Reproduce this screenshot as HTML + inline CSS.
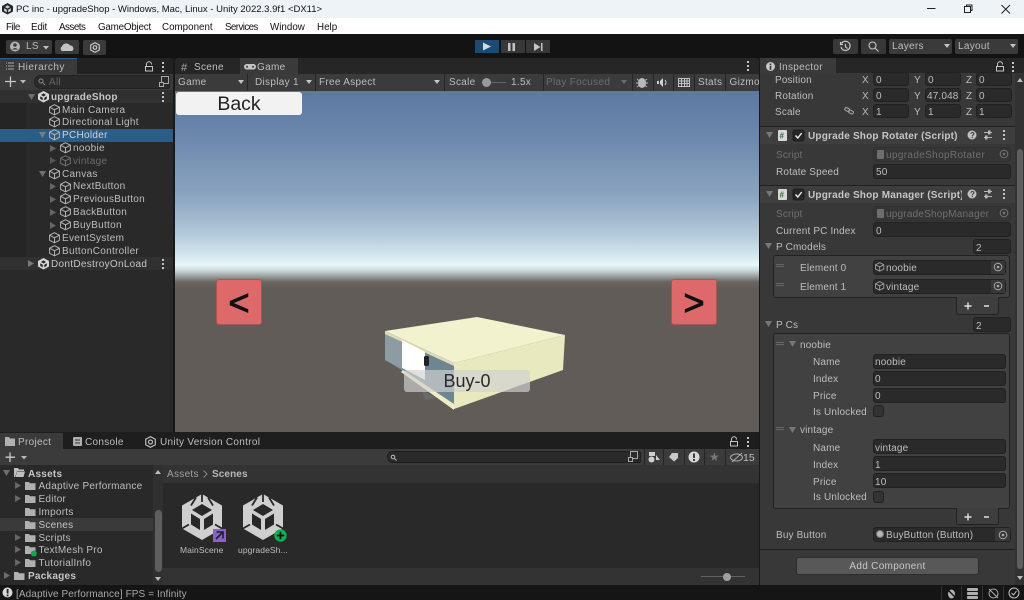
<!DOCTYPE html>
<html><head><meta charset="utf-8"><style>
html,body{margin:0;padding:0;width:1024px;height:600px;overflow:hidden;background:#191919;font-family:"Liberation Sans",sans-serif}
#r{position:relative;width:1024px;height:600px;overflow:hidden;letter-spacing:.3px}
.b{position:absolute}
.t{position:absolute;white-space:nowrap;font-size:10px;line-height:12px;height:12px;color:#bdbdbd;margin-top:1px}
.ins .t{margin-top:2px;letter-spacing:.15px}
.p2 .t{margin-top:2px;letter-spacing:.25px}
.d{color:#7e7e7e}.h{font-weight:bold;color:#c6c6c6;letter-spacing:.2px}
.f{position:absolute;background:#2a2a2a;border:1px solid #212121;border-radius:3px;box-sizing:border-box;height:15px}
svg.i{position:absolute;overflow:visible}
.m{position:absolute;top:22px;font-size:9.800px;line-height:12px;color:#111;white-space:nowrap;letter-spacing:0}
</style></head><body><div id="r">
<svg width="0" height="0" style="position:absolute"><defs>
<g id="cube" fill="none" stroke="#b4b4b4" stroke-width="1"><path d="M5.500 .7 10.400 3.200V8.300L5.500 10.800 .6 8.300V3.200ZM.6 3.200 5.500 5.800 10.400 3.200M5.500 5.800V10.800"/></g>
<g id="ucube"><path d="M5.500 0 11 3V8.500L5.500 11.500 0 8.500V3Z" fill="#d8d8d8"/><path d="M5.500 2.300 8 4 5.500 5.500 3 4ZM2.200 5.300 4.800 6.800V9.400L2.200 7.900ZM8.800 5.300 6.200 6.800V9.400L8.800 7.900Z" fill="#2a2a2a"/></g>
<g id="folder"><path d="M0 2H4L5 3.200H10.500V10H0Z" fill="#b0b0b0"/></g>
<g id="unity"><path d="M20 0 40 11.500V34.500L20 46 0 34.500V11.500Z" fill="#cfcfcf"/><path d="M20 10 30 16 20 22 10 16ZM9 19.500 18 25V36L9 30.500ZM31 19.500 22 25V36L31 30.500Z" fill="#282828"/><path d="M20 0V8M0 34.500 7 30.500M40 34.500 33 30.500M14 3.500 9 11.500M26 3.500 31 11.500" stroke="#282828" stroke-width="1.800"/></g>
<g id="tarrow"><path d="M0 0H7L3.500 6Z"/></g>
<g id="rarrow"><path d="M0 0 6 3.500 0 7Z"/></g>
<g id="pick" fill="none" stroke="#a8a8a8"><circle cx="5" cy="5" r="3.800"/><circle cx="5" cy="5" r="1.300" fill="#a8a8a8" stroke="none"/></g>
<g id="dots" fill="#c4c4c4"><rect x="0" y="0" width="2" height="2"/><rect x="0" y="4" width="2" height="2"/><rect x="0" y="8" width="2" height="2"/></g>
<g id="lock" fill="none" stroke="#c4c4c4" stroke-width="1"><rect x=".5" y="4.500" width="7" height="4.500"/><path d="M1.500 4.500V2.500A2.500 2.500 0 0 1 6.500 2V2.500"/></g>
<g id="script"><rect width="9" height="11" rx="1" fill="#d8d8d8"/><text x="1.500" y="8.500" font-size="8" font-weight="bold" fill="#2b6b3c" font-family="Liberation Sans">#</text></g>
<g id="check"><rect width="11" height="11" rx="2" fill="#262626" stroke="#1c1c1c"/><path d="M2.500 5.500 4.800 8 8.700 3" fill="none" stroke="#ececec" stroke-width="1.400"/></g>
<g id="ctrl" fill="none" stroke="#b8b8b8"><path d="M0 2.500H8M0 7.500H8"/><rect x="4.500" y="1" width="1.500" height="3" fill="#b8b8b8"/><rect x="1.500" y="6" width="1.500" height="3" fill="#b8b8b8"/></g>
<g id="help"><circle cx="5" cy="5" r="4.500" fill="#c0c0c0"/><text x="3" y="8" font-size="8" font-weight="bold" fill="#383838" font-family="Liberation Sans">?</text></g>
</defs></svg>

<!-- title -->
<div class="b" style="left:0;top:0;width:1024px;height:18px;background:#eef3f8"></div>
<svg class="i" style="left:2px;top:3px" width="11" height="12"><use href="#ucube" style="filter:invert(1)"/></svg>
<div class="t" style="left:16px;top:3px;color:#111;letter-spacing:0;font-size:9.500px">PC inc - upgradeShop - Windows, Mac, Linux - Unity 2022.3.9f1 &lt;DX11&gt;</div>
<svg class="i" style="left:925px;top:3px" width="95" height="14" fill="none" stroke="#222"><path d="M2 5.500H10.500"/><rect x="39.500" y="3.500" width="6" height="6"/><path d="M41.500 3.500V2H47V7.500H45.500"/><path d="M76.500 2 85 10.500M85 2 76.500 10.500"/></svg>
<!-- menu -->
<div class="b" style="left:0;top:18px;width:1024px;height:16px;background:#fff"></div>
<div class="m" style="left:6px;letter-spacing:-.5px">File</div><div class="m" style="left:31px;letter-spacing:-.2px">Edit</div><div class="m" style="left:59px;letter-spacing:-.5px">Assets</div><div class="m" style="left:98px;letter-spacing:-.2px">GameObject</div><div class="m" style="left:162px">Component</div><div class="m" style="left:225px;letter-spacing:-.6px">Services</div><div class="m" style="left:270px">Window</div><div class="m" style="left:317px">Help</div>
<!-- toolbar -->
<div class="b" style="left:0;top:34px;width:1024px;height:24px;background:#131313"></div>
<div class="b" style="left:6px;top:40px;width:46px;height:14px;background:#3a3a3a;border-radius:2px"></div>
<svg class="i" style="left:10px;top:41px" width="40" height="12"><circle cx="5" cy="5.500" r="5" fill="#b4b4b4"/><circle cx="5" cy="4" r="1.800" fill="#3a3a3a"/><path d="M2 8.500Q5 5.500 8 8.500" fill="#3a3a3a"/><path d="M33 5H39L36 8.500Z" fill="#c0c0c0"/></svg>
<div class="t" style="left:26px;top:40px;color:#b8b8b8">LS</div>
<div class="b" style="left:55px;top:40px;width:24px;height:14px;background:#3a3a3a;border-radius:2px"></div>
<svg class="i" style="left:60px;top:42px" width="14" height="10"><path d="M2 9A2.500 2.500 0 0 1 2 4.500 4.500 4.500 0 0 1 10 3.500 3 3 0 0 1 12 9Z" fill="#c4c4c4"/></svg>
<div class="b" style="left:83px;top:40px;width:23px;height:15px;background:#3a3a3a;border-radius:2px"></div>
<svg class="i" style="left:90px;top:42px" width="10" height="11" fill="none" stroke="#c4c4c4" stroke-width="1.200"><path d="M5 .7 9.300 3V8L5 10.300 .7 8V3Z"/><circle cx="5" cy="5.500" r="1.800"/></svg>
<div class="b" style="left:475px;top:40px;width:24px;height:13px;background:#1d4a75"></div>
<div class="b" style="left:501px;top:40px;width:24px;height:13px;background:#383838"></div>
<div class="b" style="left:526px;top:40px;width:24px;height:13px;background:#383838"></div>
<svg class="i" style="left:475px;top:40px" width="80" height="14" fill="#d8d8d8"><path d="M8 2.500 16 6.500 8 10.500Z"/><rect x="33" y="3" width="2.500" height="8" fill="#c4c4c4"/><rect x="37.500" y="3" width="2.500" height="8" fill="#c4c4c4"/><path d="M59 3 65.500 7 59 11Z" fill="#c4c4c4"/><rect x="66" y="3" width="1.500" height="8" fill="#c4c4c4"/></svg>
<div class="b" style="left:833px;top:39px;width:25px;height:15px;background:#383838;border-radius:2px"></div>
<svg class="i" style="left:840px;top:41px" width="11" height="11" fill="none" stroke="#c4c4c4" stroke-width="1.200"><path d="M1.500 2.500A4.600 4.600 0 1 1 1 6M5.500 3V6L7.500 7.500M.5 1V3.500H3"/></svg>
<div class="b" style="left:861px;top:39px;width:25px;height:15px;background:#383838;border-radius:2px"></div>
<svg class="i" style="left:868px;top:41px" width="11" height="11" fill="none" stroke="#c4c4c4" stroke-width="1.100"><circle cx="4.500" cy="4.500" r="3.500"/><path d="M7 7 10.500 10.500"/></svg>
<div class="b" style="left:889px;top:39px;width:63px;height:15px;background:#3a3a3a;border-radius:2px"></div>
<div class="b" style="left:955px;top:39px;width:63px;height:15px;background:#3a3a3a;border-radius:2px"></div>
<div class="t" style="left:892px;top:40px">Layers</div><div class="t" style="left:958px;top:40px">Layout</div>
<svg class="i" style="left:944px;top:44px" width="7" height="5" fill="#c4c4c4"><path d="M0 0H6L3 4Z"/></svg>
<svg class="i" style="left:1010px;top:44px" width="7" height="5" fill="#c4c4c4"><path d="M0 0H6L3 4Z"/></svg>

<!-- hierarchy -->
<div class="b" style="left:0;top:58px;width:173px;height:16px;background:#222;border-radius:3px 3px 0 0"></div>
<div class="b" style="left:0;top:58px;width:77px;height:16px;background:#3a3a3a;border-top:1px solid #2a6090;box-sizing:border-box"></div>
<svg class="i" style="left:6px;top:62px" width="8" height="8" stroke="#aaa"><path d="M0 1H1M2 1H8M0 4H1M2 4H8M0 7H1M2 7H8"/></svg>
<div class="t" style="left:18px;top:61px;letter-spacing:.45px">Hierarchy</div>
<svg class="i" style="left:145px;top:62px" width="8" height="10"><use href="#lock"/></svg>
<svg class="i" style="left:162px;top:62px" width="2" height="10"><use href="#dots"/></svg>
<div class="b" style="left:0;top:74px;width:173px;height:16px;background:#3b3b3b"></div>
<svg class="i" style="left:5px;top:76px" width="22" height="12"><path d="M5.500 .5V11M0 5.500H11" stroke="#c8c8c8" stroke-width="1.300"/><path d="M15 4H21L18 7.500Z" fill="#b8b8b8"/></svg>
<div class="b" style="left:34px;top:75px;width:136px;height:14px;background:#2a2a2a;border-radius:7px 2px 2px 7px;border:1px solid #222;box-sizing:border-box"></div>
<svg class="i" style="left:38px;top:78px" width="8" height="8" fill="none" stroke="#888"><circle cx="3" cy="3" r="2"/><path d="M4.500 4.500 7 7"/></svg>
<div class="t d" style="left:49px;top:76px;color:#666">All</div>
<svg class="i" style="left:159px;top:76px" width="10" height="11" fill="none" stroke="#a8a8a8"><rect x="2.500" y=".5" width="7" height="7"/><rect x=".5" y="6.500" width="4" height="4" fill="#2a2a2a"/></svg>
<div class="b" style="left:0;top:90px;width:173px;height:342px;background:#292929"></div>
<div class="b" style="left:0;top:103px;width:26px;height:154px;background:#252525"></div>
<div class="b" style="left:0;top:90px;width:173px;height:13px;background:#303030"></div>
<div class="b" style="left:0;top:257px;width:173px;height:13px;background:#303030"></div>
<div class="b" style="left:0;top:129px;width:173px;height:13px;background:#2c5d87"></div>
<svg class="i" style="left:28px;top:94px" width="7" height="6" fill="#6e6e6e"><use href="#tarrow"/></svg>
<svg class="i" style="left:38px;top:91px" width="11" height="12"><use href="#ucube"/></svg>
<div class="t h" style="left:51px;top:91px">upgradeShop</div>
<svg class="i" style="left:162px;top:92px" width="2" height="10"><use href="#dots"/></svg>

<svg class="i" style="left:49px;top:104px" width="11" height="12"><use href="#cube"/></svg><div class="t" style="left:62px;top:103.500px">Main Camera</div>
<svg class="i" style="left:49px;top:116px" width="11" height="12"><use href="#cube"/></svg><div class="t" style="left:62px;top:116px">Directional Light</div>
<svg class="i" style="left:39px;top:132px" width="7" height="6" fill="#6e8090"><use href="#tarrow"/></svg>
<svg class="i" style="left:49px;top:129px" width="11" height="12"><use href="#cube"/></svg><div class="t" style="left:62px;top:129px;color:#d4d4d4">PCHolder</div>
<svg class="i" style="left:50px;top:145px" width="6" height="7" fill="#666"><use href="#rarrow"/></svg>
<svg class="i" style="left:60px;top:142px" width="11" height="12"><use href="#cube"/></svg><div class="t" style="left:73px;top:142px">noobie</div>
<svg class="i" style="left:50px;top:157px" width="6" height="7" fill="#555"><use href="#rarrow"/></svg>
<svg class="i" style="left:60px;top:155px;opacity:.5" width="11" height="12"><use href="#cube"/></svg><div class="t" style="left:73px;top:154.500px;color:#6a6a6a">vintage</div>
<svg class="i" style="left:39px;top:171px" width="7" height="6" fill="#6e6e6e"><use href="#tarrow"/></svg>
<svg class="i" style="left:49px;top:168px" width="11" height="12"><use href="#cube"/></svg><div class="t" style="left:62px;top:167.500px">Canvas</div>
<svg class="i" style="left:50px;top:183px" width="6" height="7" fill="#666"><use href="#rarrow"/></svg>
<svg class="i" style="left:60px;top:181px" width="11" height="12"><use href="#cube"/></svg><div class="t" style="left:73px;top:180px">NextButton</div>
<svg class="i" style="left:50px;top:196px" width="6" height="7" fill="#666"><use href="#rarrow"/></svg>
<svg class="i" style="left:60px;top:193px" width="11" height="12"><use href="#cube"/></svg><div class="t" style="left:73px;top:193px">PreviousButton</div>
<svg class="i" style="left:50px;top:209px" width="6" height="7" fill="#666"><use href="#rarrow"/></svg>
<svg class="i" style="left:60px;top:206px" width="11" height="12"><use href="#cube"/></svg><div class="t" style="left:73px;top:206px">BackButton</div>
<svg class="i" style="left:50px;top:222px" width="6" height="7" fill="#666"><use href="#rarrow"/></svg>
<svg class="i" style="left:60px;top:219px" width="11" height="12"><use href="#cube"/></svg><div class="t" style="left:73px;top:219px">BuyButton</div>
<svg class="i" style="left:49px;top:232px" width="11" height="12"><use href="#cube"/></svg><div class="t" style="left:62px;top:232px">EventSystem</div>
<svg class="i" style="left:49px;top:245px" width="11" height="12"><use href="#cube"/></svg><div class="t" style="left:62px;top:244.500px">ButtonController</div>
<svg class="i" style="left:28px;top:260px" width="6" height="7" fill="#7a7a7a"><use href="#rarrow"/></svg>
<svg class="i" style="left:38px;top:258px" width="11" height="12"><use href="#ucube"/></svg><div class="t" style="left:51px;top:257.500px;color:#c4c4c4">DontDestroyOnLoad</div>
<svg class="i" style="left:162px;top:259px" width="2" height="10"><use href="#dots"/></svg>

<!-- game panel -->
<div class="b" style="left:175px;top:58px;width:584px;height:16px;background:#262626;border-radius:3px 3px 0 0"></div>
<div class="b" style="left:240px;top:58px;width:58px;height:16px;background:#3a3a3a"></div>
<div class="t" style="left:181px;top:61px;font-size:11px;color:#aaa">#</div>
<div class="t" style="left:194px;top:61px">Scene</div>
<svg class="i" style="left:244px;top:63px" width="12" height="7"><rect y="1" width="12" height="5.500" rx="2.700" fill="#c4c4c4"/><circle cx="3" cy="3.700" r="1" fill="#3a3a3a"/><circle cx="9" cy="3.700" r="1" fill="#3a3a3a"/></svg>
<div class="t" style="left:257px;top:61px">Game</div>
<svg class="i" style="left:747px;top:61px" width="2" height="10"><use href="#dots"/></svg>
<div class="b" style="left:175px;top:74px;width:584px;height:17px;background:#3b3b3b"></div>
<div class="b" style="left:247px;top:74px;width:1px;height:17px;background:#252525"></div>
<div class="b" style="left:315px;top:74px;width:1px;height:17px;background:#252525"></div>
<div class="b" style="left:444px;top:74px;width:1px;height:17px;background:#252525"></div>
<div class="b" style="left:543px;top:74px;width:1px;height:17px;background:#252525"></div>
<div class="b" style="left:632px;top:74px;width:1px;height:17px;background:#252525"></div>
<div class="b" style="left:653px;top:74px;width:1px;height:17px;background:#252525"></div>
<div class="b" style="left:673px;top:74px;width:1px;height:17px;background:#252525"></div>
<div class="b" style="left:694px;top:74px;width:1px;height:17px;background:#252525"></div>
<div class="b" style="left:725px;top:74px;width:1px;height:17px;background:#252525"></div>
<div class="t" style="left:178px;top:76px">Game</div>
<svg class="i" style="left:238px;top:80px" width="7" height="5" fill="#c4c4c4"><path d="M0 0H6L3 4Z"/></svg>
<div class="t" style="left:255px;top:76px">Display 1</div>
<svg class="i" style="left:306px;top:80px" width="7" height="5" fill="#c4c4c4"><path d="M0 0H6L3 4Z"/></svg>
<div class="t" style="left:319px;top:76px">Free Aspect</div>
<svg class="i" style="left:434px;top:80px" width="7" height="5" fill="#c4c4c4"><path d="M0 0H6L3 4Z"/></svg>
<div class="t" style="left:449px;top:76px">Scale</div>
<div class="b" style="left:482px;top:82px;width:24px;height:1px;background:#666"></div>
<div class="b" style="left:482px;top:78px;width:9px;height:9px;border-radius:50%;background:#999"></div>
<div class="t" style="left:511px;top:76px">1.5x</div>
<div class="t" style="left:546px;top:76px;color:#6c6c6c">Play Focused</div>
<svg class="i" style="left:621px;top:80px" width="7" height="5" fill="#6c6c6c"><path d="M0 0H6L3 4Z"/></svg>
<svg class="i" style="left:636px;top:76px" width="13" height="13" fill="#b8b8b8"><ellipse cx="6" cy="7" rx="4" ry="5"/><path d="M1 3 11 11M11 3 1 11M0 7H12" stroke="#b8b8b8"/></svg>
<svg class="i" style="left:657px;top:78px" width="12" height="9" fill="#d0d0d0"><rect x="0" y="3" width="2" height="3"/><path d="M3 3 6 0V9L3 6Z"/><path d="M8 2Q10 4.500 8 7" stroke="#d0d0d0" fill="none"/></svg>
<svg class="i" style="left:678px;top:78px" width="12" height="9" fill="none" stroke="#c4c4c4"><rect x=".5" y=".5" width="11" height="8"/><path d="M.5 3H11.500M.5 5.500H11.500M3.500 .5V8M6.500 .5V8M9 .5V8"/></svg>
<div class="t" style="left:698px;top:76px">Stats</div>
<div class="t" style="left:729.500px;top:76px">Gizmo</div>

<div class="b" style="left:175px;top:91px;width:584px;height:341px;background:linear-gradient(180deg,#5d79a1 0,#6c87ac 45px,#8ba4c0 105px,#b0c8d8 142px,#d4e8ee 165px,#e8f8fa 174px,#c6d4d4 180px,#929a97 186px,#6a6561 191px,#625c58 198px,#625c58 341px)"></div>
<div class="b" style="left:176px;top:92px;width:126px;height:23px;background:#f2f2f2;border-radius:3px;text-align:center;font-size:19.500px;line-height:25px;color:#222;letter-spacing:0">Back</div>
<div class="b" style="left:216px;top:279px;width:46px;height:46px;background:#dd696b;border:1px solid #a55;box-sizing:border-box;border-radius:3px;text-align:center;font-size:36px;line-height:45px;color:#111;letter-spacing:0;-webkit-text-stroke:1px #111">&lt;</div>
<div class="b" style="left:671px;top:279px;width:46px;height:46px;background:#dd696b;border:1px solid #a55;box-sizing:border-box;border-radius:3px;text-align:center;font-size:36px;line-height:45px;color:#111;letter-spacing:0;-webkit-text-stroke:1px #111">&gt;</div>
<svg class="i" style="left:370px;top:300px" width="210" height="120">
<path d="M52 90 66 98 55 100Z" fill="#6a6a6a"/>
<path d="M15 31 107 17 195 35 84 63Z" fill="#f3f2cf"/>
<path d="M84 63 195 35 193 70 84 109Z" fill="#e9e9bf"/>
<path d="M15 31 84 63V109L33 71 15 60Z" fill="#6f8590"/>
<path d="M15 31 32 39V69L15 60Z" fill="#8d9ba2"/>
<path d="M15 31 84 63 84 66 15 34Z" fill="#dcdcb8"/>
<path d="M32 40 55 52V80L32 68Z" fill="#fff"/>
<rect x="54" y="56" width="5" height="10" rx="1.500" fill="#222"/>
<path d="M33 70 84 104V110L31 72Z" fill="#efedc4"/>
</svg>
<div class="b" style="left:404px;top:370px;width:126px;height:22px;background:rgba(210,210,210,.68);border-radius:3px;text-align:center;font-size:18px;line-height:23px;color:#2a2a2a;letter-spacing:0">Buy-0</div>

<!-- project -->
<div class="b" style="left:0;top:432px;width:759px;height:17px;background:#1e1e1e"></div>
<div class="b" style="left:0;top:433px;width:63px;height:16px;background:#3a3a3a"></div>
<svg class="i" style="left:5px;top:437px" width="11" height="9"><path d="M0 0H4L5 1.500H10V9H0Z" fill="#b0b0b0"/></svg>
<div class="t" style="left:18px;top:436px">Project</div>
<svg class="i" style="left:73px;top:437px" width="9" height="9"><rect width="9" height="9" rx="1" fill="#b0b0b0"/><path d="M2 3H7M2 6H7" stroke="#333"/></svg>
<div class="t" style="left:85px;top:436px">Console</div>
<svg class="i" style="left:145px;top:436px" width="11" height="12" fill="none" stroke="#bbb" stroke-width="1.200"><path d="M5.500 .7 10.300 3.200V8.800L5.500 11.300 .7 8.800V3.200Z"/><circle cx="5.500" cy="6" r="2"/></svg>
<div class="t" style="left:160px;top:436px">Unity Version Control</div>
<svg class="i" style="left:730px;top:437px" width="8" height="10"><use href="#lock"/></svg>
<svg class="i" style="left:747px;top:437px" width="2" height="10"><use href="#dots"/></svg>
<div class="b" style="left:0;top:449px;width:759px;height:16px;background:#3b3b3b"></div>
<svg class="i" style="left:5px;top:452px" width="22" height="12"><path d="M5 .5V10M.5 5.200H10" stroke="#c8c8c8" stroke-width="1.300"/><path d="M16 4H22L19 7.500Z" fill="#b8b8b8"/></svg>
<div class="b" style="left:387px;top:451px;width:254px;height:12px;background:#2a2a2a;border:1px solid #1e1e1e;border-radius:6px 2px 2px 6px;box-sizing:border-box"></div>
<svg class="i" style="left:390px;top:454px" width="7" height="7" fill="none" stroke="#bbb"><circle cx="3" cy="3" r="1.800"/><path d="M4.500 4.500 6.500 6.500"/></svg>
<svg class="i" style="left:628px;top:451px" width="10" height="11" fill="none" stroke="#a8a8a8"><rect x="2.500" y=".5" width="7" height="7"/><rect x=".5" y="6.500" width="4" height="4" fill="#2a2a2a"/></svg>
<div class="b" style="left:644px;top:449px;width:1px;height:16px;background:#252525"></div>
<div class="b" style="left:663px;top:449px;width:1px;height:16px;background:#252525"></div>
<div class="b" style="left:684px;top:449px;width:1px;height:16px;background:#252525"></div>
<div class="b" style="left:704px;top:449px;width:1px;height:16px;background:#252525"></div>
<div class="b" style="left:725px;top:449px;width:1px;height:16px;background:#252525"></div>
<svg class="i" style="left:648px;top:452px" width="12" height="11" fill="#cfcfcf"><rect x="1" y="0" width="6" height="4"/><circle cx="3.500" cy="7.500" r="3"/><path d="M8 3 12 8H8Z"/></svg>
<svg class="i" style="left:668px;top:452px" width="11" height="10"><path d="M4 1H10V6L6 9.500 1 5Z" fill="#c8c8c8"/></svg>
<svg class="i" style="left:688px;top:451px" width="12" height="12"><circle cx="6" cy="6" r="5.500" fill="#d8d8d8"/><rect x="5" y="2.500" width="2" height="4.500" fill="#3b3b3b"/><rect x="5" y="8" width="2" height="2" fill="#3b3b3b"/></svg>
<div class="t" style="left:709px;top:450px;font-size:12px;color:#777">★</div>
<svg class="i" style="left:730px;top:453px" width="13" height="9" fill="none" stroke="#aaa"><ellipse cx="6.500" cy="4.500" rx="6" ry="3.500"/><path d="M2 9 12 0"/></svg>
<div class="t" style="left:743px;top:451px;letter-spacing:0;font-size:10.500px">15</div>

<div class="b" style="left:0;top:465px;width:163px;height:120px;background:#292929"></div>
<div class="b" style="left:0;top:518px;width:153px;height:13px;background:#3a3a3a"></div>
<div class="b" style="left:153px;top:465px;width:10px;height:120px;background:#303030"></div>
<div class="b" style="left:155px;top:510px;width:7px;height:62px;background:#5e5e5e;border-radius:4px"></div>
<svg class="i" style="left:155px;top:470px" width="7" height="5" fill="#bbb"><path d="M0 4H6L3 0Z"/></svg>
<svg class="i" style="left:155px;top:577px" width="7" height="5" fill="#bbb"><path d="M0 0H6L3 4Z"/></svg>

<div class="p2">
<svg class="i" style="left:3px;top:470px" width="7" height="6" fill="#6e6e6e"><use href="#tarrow"/></svg>
<svg class="i" style="left:14px;top:467px" width="12" height="11"><path d="M0 1H4L5 2.500H10V4H3L1 10H0ZM3 4.500H11L9.500 10H1.500Z" fill="#c0c0c0"/></svg>
<div class="t h" style="left:28px;top:467px">Assets</div>
<svg class="i" style="left:15px;top:482px" width="6" height="7" fill="#666"><use href="#rarrow"/></svg>
<svg class="i" style="left:25px;top:480px" width="11" height="11"><use href="#folder"/></svg><div class="t" style="left:38.500px;top:479px">Adaptive Performance</div>
<svg class="i" style="left:15px;top:495px" width="6" height="7" fill="#666"><use href="#rarrow"/></svg>
<svg class="i" style="left:25px;top:493px" width="11" height="11"><use href="#folder"/></svg><div class="t" style="left:38.500px;top:492px">Editor</div>
<svg class="i" style="left:25px;top:506px" width="11" height="11"><use href="#folder"/></svg><div class="t" style="left:38.500px;top:505px">Imports</div>
<svg class="i" style="left:25px;top:519px" width="11" height="11"><use href="#folder"/></svg><div class="t" style="left:38.500px;top:518px;color:#c4c4c4">Scenes</div>
<svg class="i" style="left:15px;top:534px" width="6" height="7" fill="#666"><use href="#rarrow"/></svg>
<svg class="i" style="left:25px;top:532px" width="11" height="11"><use href="#folder"/></svg><div class="t" style="left:38.500px;top:531px">Scripts</div>
<svg class="i" style="left:15px;top:546px" width="6" height="7" fill="#666"><use href="#rarrow"/></svg>
<svg class="i" style="left:25px;top:544px" width="13" height="13"><use href="#folder"/><circle cx="8.800" cy="9.500" r="3" fill="#0fa84a"/></svg><div class="t" style="left:38.500px;top:543px">TextMesh Pro</div>
<svg class="i" style="left:15px;top:559px" width="6" height="7" fill="#666"><use href="#rarrow"/></svg>
<svg class="i" style="left:25px;top:557px" width="11" height="11"><use href="#folder"/></svg><div class="t" style="left:38.500px;top:556px">TutorialInfo</div>
<svg class="i" style="left:4px;top:572px" width="6" height="7" fill="#6e6e6e"><use href="#rarrow"/></svg>
<svg class="i" style="left:14px;top:570px" width="11" height="11"><use href="#folder"/></svg><div class="t h" style="left:28px;top:569px">Packages</div>
</div>

<div class="b" style="left:163px;top:465px;width:596px;height:18px;background:#333"></div>
<div class="t" style="left:167px;top:468px;color:#a0a0a0">Assets</div>
<svg class="i" style="left:203px;top:470px" width="5" height="8" fill="none" stroke="#888"><path d="M.5 .5 4 4 .5 7.500"/></svg>
<div class="t h" style="left:212px;top:468px;color:#b8b8b8;letter-spacing:.1px">Scenes</div>
<div class="b" style="left:163px;top:483px;width:596px;height:85px;background:#292929"></div>
<div class="b" style="left:163px;top:568px;width:596px;height:17px;background:#333"></div>
<div class="b" style="left:701px;top:576px;width:44px;height:1px;background:#606060"></div>
<div class="b" style="left:723px;top:573px;width:8px;height:8px;border-radius:50%;background:#a0a0a0"></div>
<svg class="i" style="left:182px;top:494px" width="40" height="46"><use href="#unity"/></svg>
<svg class="i" style="left:243px;top:494px" width="40" height="46"><use href="#unity"/></svg>
<svg class="i" style="left:213px;top:529px" width="13" height="13"><rect width="13" height="13" fill="#8a63c9"/><path d="M3.500 3H10V9.500M10 3 3 10" fill="none" stroke="#1f1f2e" stroke-width="1.600"/></svg>
<svg class="i" style="left:274px;top:529px" width="13" height="13"><circle cx="6.500" cy="6.500" r="6.200" fill="#0fb050"/><path d="M6.500 2.800V10.200M2.800 6.500H10.200" stroke="#111" stroke-width="1.800"/></svg>
<div class="t" style="left:180px;top:543px;font-size:8.500px;letter-spacing:.1px">MainScene</div>
<div class="t" style="left:238px;top:543px;font-size:8.500px;letter-spacing:.1px">upgradeSh...</div>

<!-- inspector -->
<div class="b" style="left:760px;top:58px;width:264px;height:16px;background:#262626"></div>
<div class="b" style="left:760px;top:58px;width:76px;height:16px;background:#3a3a3a"></div>
<svg class="i" style="left:766px;top:62px" width="9" height="9"><circle cx="4.500" cy="4.500" r="4.500" fill="#c8c8c8"/><rect x="3.700" y="1.500" width="1.600" height="1.600" fill="#333"/><rect x="3.700" y="3.800" width="1.600" height="4" fill="#333"/></svg>
<div class="t" style="left:779px;top:61px">Inspector</div>
<svg class="i" style="left:996px;top:62px" width="8" height="10"><use href="#lock"/></svg>
<svg class="i" style="left:1012px;top:62px" width="2" height="10"><use href="#dots"/></svg>
<div class="b" style="left:760px;top:73px;width:264px;height:512px;background:#383838"></div>
<div class="b" style="left:1015px;top:73px;width:9px;height:512px;background:#323232"></div>
<div class="b" style="left:1017px;top:149px;width:6px;height:420px;background:#5f5f5f;border-radius:3px"></div>
<svg class="i" style="left:1017px;top:78px" width="7" height="5" fill="#bbb"><path d="M0 4H6L3 0Z"/></svg>
<svg class="i" style="left:1017px;top:576px" width="7" height="5" fill="#bbb"><path d="M0 0H6L3 4Z"/></svg>
<div class="f" style="left:873px;top:72px;width:36px;height:14px"></div><div class="f" style="left:925px;top:72px;width:36px;height:14px"></div><div class="f" style="left:976px;top:72px;width:36px;height:14px"></div>
<div class="f" style="left:873px;top:88px;width:36px;height:14px"></div><div class="f" style="left:925px;top:88px;width:36px;height:14px"></div><div class="f" style="left:976px;top:88px;width:36px;height:14px"></div>
<div class="f" style="left:873px;top:104px;width:36px;height:14px"></div><div class="f" style="left:925px;top:104px;width:36px;height:14px"></div><div class="f" style="left:976px;top:104px;width:36px;height:14px"></div>
<div class="ins">
<div class="t" style="left:775px;top:72.500px">Position</div><div class="t" style="left:775px;top:89px">Rotation</div><div class="t" style="left:775px;top:105px">Scale</div>
<div class="t" style="left:862px;top:72.500px">X</div><div class="t" style="left:862px;top:89px">X</div><div class="t" style="left:862px;top:105px">X</div>
<div class="t" style="left:914px;top:72.500px">Y</div><div class="t" style="left:914px;top:89px">Y</div><div class="t" style="left:914px;top:105px">Y</div>
<div class="t" style="left:966px;top:72.500px">Z</div><div class="t" style="left:966px;top:89px">Z</div><div class="t" style="left:966px;top:105px">Z</div>
<div class="t" style="left:876px;top:72.500px">0</div><div class="t" style="left:928px;top:72.500px">0</div><div class="t" style="left:979px;top:72.500px">0</div>
<div class="t" style="left:876px;top:89px">0</div><div class="t" style="left:927px;top:89px;width:33px;overflow:hidden">47.048</div><div class="t" style="left:979px;top:89px">0</div>
<div class="t" style="left:876px;top:105px">1</div><div class="t" style="left:928px;top:105px">1</div><div class="t" style="left:979px;top:105px">1</div>
<svg class="i" style="left:844px;top:107px" width="10" height="8" fill="none" stroke="#aaa"><rect x=".5" y="1" width="5" height="3" rx="1.500" transform="rotate(25 3 3)"/><rect x="4.500" y="3.500" width="5" height="3" rx="1.500" transform="rotate(25 7 5)"/></svg>

<div class="b" style="left:760px;top:126px;width:255px;height:1px;background:#212121"></div>
<div class="b" style="left:760px;top:127px;width:255px;height:17px;background:#3e3e3e"></div>
<svg class="i" style="left:766px;top:132px" width="7" height="6" fill="#777"><use href="#tarrow"/></svg>
<svg class="i" style="left:778px;top:130px" width="9" height="11"><use href="#script"/></svg>
<svg class="i" style="left:793px;top:130px" width="12" height="12"><use href="#check"/></svg>
<div class="t h" style="left:808px;top:129px;letter-spacing:.2px">Upgrade Shop Rotater (Script)</div>
<svg class="i" style="left:967px;top:130px" width="10" height="10"><use href="#help"/></svg>
<svg class="i" style="left:984px;top:130px" width="9" height="10"><use href="#ctrl"/></svg>
<svg class="i" style="left:1003px;top:130px" width="2" height="10"><use href="#dots"/></svg>
<div class="t d" style="left:776px;top:148px;color:#6f6f6f">Script</div>
<div class="f" style="left:873px;top:147px;width:138px;background:#353535;border-color:#303030"></div>
<svg class="i" style="left:877px;top:150px" width="8" height="9"><rect width="7" height="9" rx="1" fill="#6e6e6e"/></svg>
<div class="t" style="left:886px;top:148px;color:#6f6f6f;letter-spacing:.35px">upgradeShopRotater</div>
<svg class="i" style="left:999px;top:149px;opacity:.55" width="10" height="10"><use href="#pick"/></svg>
<div class="t" style="left:776px;top:165px">Rotate Speed</div>
<div class="f" style="left:873px;top:164px;width:138px"></div><div class="t" style="left:876px;top:165px">50</div>

<div class="b" style="left:760px;top:185px;width:255px;height:1px;background:#212121"></div>
<div class="b" style="left:760px;top:186px;width:255px;height:17px;background:#3e3e3e"></div>
<svg class="i" style="left:766px;top:191px" width="7" height="6" fill="#777"><use href="#tarrow"/></svg>
<svg class="i" style="left:778px;top:189px" width="9" height="11"><use href="#script"/></svg>
<svg class="i" style="left:793px;top:189px" width="12" height="12"><use href="#check"/></svg>
<div class="t h" style="left:808px;top:188px;letter-spacing:.2px;width:154px;overflow:hidden">Upgrade Shop Manager (Script)</div>
<svg class="i" style="left:967px;top:189px" width="10" height="10"><use href="#help"/></svg>
<svg class="i" style="left:984px;top:189px" width="9" height="10"><use href="#ctrl"/></svg>
<svg class="i" style="left:1003px;top:189px" width="2" height="10"><use href="#dots"/></svg>
<div class="t" style="left:776px;top:207px;color:#6f6f6f">Script</div>
<div class="f" style="left:873px;top:206px;width:138px;background:#353535;border-color:#303030"></div>
<svg class="i" style="left:877px;top:209px" width="8" height="9"><rect width="7" height="9" rx="1" fill="#6e6e6e"/></svg>
<div class="t" style="left:886px;top:207px;color:#6f6f6f;letter-spacing:.2px">upgradeShopManager</div>
<svg class="i" style="left:999px;top:208px;opacity:.55" width="10" height="10"><use href="#pick"/></svg>
<div class="t" style="left:776px;top:224px">Current PC Index</div>
<div class="f" style="left:873px;top:222px;width:138px"></div><div class="t" style="left:876px;top:224px">0</div>
<svg class="i" style="left:765px;top:243px" width="7" height="6" fill="#777"><use href="#tarrow"/></svg>
<div class="t" style="left:776px;top:240px">P Cmodels</div>
<div class="f" style="left:973px;top:239px;width:38px"></div><div class="t" style="left:976px;top:240.500px">2</div>
<div class="b" style="left:773px;top:255px;width:237px;height:43px;background:#414141;border:1px solid #222;box-sizing:border-box;border-radius:3px"></div>
<div class="b" style="left:776px;top:264px;width:8px;height:1px;background:#666"></div><div class="b" style="left:776px;top:266px;width:8px;height:1px;background:#666"></div>
<div class="b" style="left:776px;top:283px;width:8px;height:1px;background:#666"></div><div class="b" style="left:776px;top:285px;width:8px;height:1px;background:#666"></div>
<div class="t" style="left:800px;top:261px">Element 0</div><div class="t" style="left:800px;top:280px">Element 1</div>
<div class="f" style="left:873px;top:260px;width:133px"></div><div class="f" style="left:873px;top:279px;width:133px"></div>
<div class="b" style="left:991px;top:261px;width:14px;height:13px;background:#383838"></div><div class="b" style="left:991px;top:280px;width:14px;height:13px;background:#383838"></div>
<svg class="i" style="left:875px;top:262px;opacity:.9" width="10" height="11"><use href="#cube" transform="scale(.85)"/></svg>
<svg class="i" style="left:875px;top:281px;opacity:.9" width="10" height="11"><use href="#cube" transform="scale(.85)"/></svg>
<div class="t" style="left:886px;top:261px">noobie</div><div class="t" style="left:886px;top:280px">vintage</div>
<svg class="i" style="left:993px;top:262px" width="10" height="10"><use href="#pick"/></svg>
<svg class="i" style="left:993px;top:281px" width="10" height="10"><use href="#pick"/></svg>
<div class="b" style="left:956px;top:297px;width:43px;height:18px;background:#3e3e3e;border:1px solid #222;border-top:0;box-sizing:border-box;border-radius:0 0 3px 3px"></div>
<svg class="i" style="left:964px;top:302px" width="28" height="8" stroke="#e0e0e0" stroke-width="1.400"><path d="M4 .5V7.500M.5 4H7.500M20 4H25"/></svg>

<svg class="i" style="left:765px;top:321px" width="7" height="6" fill="#777"><use href="#tarrow"/></svg>
<div class="t" style="left:776px;top:318px">P Cs</div>
<div class="f" style="left:973px;top:317px;width:38px"></div><div class="t" style="left:976px;top:318.500px">2</div>
<div class="b" style="left:773px;top:333px;width:237px;height:176px;background:#414141;border:1px solid #222;box-sizing:border-box;border-radius:3px"></div>
<div class="b" style="left:776px;top:342px;width:8px;height:1px;background:#666"></div><div class="b" style="left:776px;top:344px;width:8px;height:1px;background:#666"></div>
<div class="b" style="left:776px;top:427px;width:8px;height:1px;background:#666"></div><div class="b" style="left:776px;top:429px;width:8px;height:1px;background:#666"></div>
<svg class="i" style="left:789px;top:341px" width="7" height="6" fill="#777"><use href="#tarrow"/></svg>
<svg class="i" style="left:789px;top:427px" width="7" height="6" fill="#777"><use href="#tarrow"/></svg>
<div class="t" style="left:800px;top:338px">noobie</div><div class="t" style="left:800px;top:423px">vintage</div>
<div class="t" style="left:813px;top:355px">Name</div><div class="t" style="left:813px;top:372px">Index</div><div class="t" style="left:813px;top:389px">Price</div><div class="t" style="left:813px;top:405px">Is Unlocked</div>
<div class="t" style="left:813px;top:441px">Name</div><div class="t" style="left:813px;top:458px">Index</div><div class="t" style="left:813px;top:475px">Price</div><div class="t" style="left:813px;top:490px">Is Unlocked</div>
<div class="f" style="left:873px;top:354px;width:133px"></div><div class="f" style="left:873px;top:371px;width:133px"></div><div class="f" style="left:873px;top:388px;width:133px"></div>
<div class="f" style="left:873px;top:405px;width:11px;height:12px;background:#333"></div>
<div class="f" style="left:873px;top:439px;width:133px"></div><div class="f" style="left:873px;top:456px;width:133px"></div><div class="f" style="left:873px;top:473px;width:133px"></div>
<div class="f" style="left:873px;top:491px;width:11px;height:12px;background:#333"></div>
<div class="t" style="left:875px;top:355px">noobie</div><div class="t" style="left:875px;top:372px">0</div><div class="t" style="left:875px;top:389px">0</div>
<div class="t" style="left:875px;top:440.500px">vintage</div><div class="t" style="left:875px;top:457.500px">1</div><div class="t" style="left:875px;top:474.500px">10</div>
<div class="b" style="left:956px;top:508px;width:43px;height:17px;background:#3e3e3e;border:1px solid #222;border-top:0;box-sizing:border-box;border-radius:0 0 3px 3px"></div>
<svg class="i" style="left:964px;top:513px" width="28" height="8" stroke="#e0e0e0" stroke-width="1.400"><path d="M4 .5V7.500M.5 4H7.500M20 4H25"/></svg>
<div class="t" style="left:776px;top:528px">Buy Button</div>
<div class="f" style="left:873px;top:527px;width:138px"></div>
<div class="b" style="left:995px;top:528px;width:15px;height:13px;background:#383838"></div>
<svg class="i" style="left:876px;top:530px" width="8" height="8"><circle cx="4" cy="4" r="3.500" fill="#b4b4b4" stroke="#777"/></svg>
<div class="t" style="left:886px;top:528px">BuyButton (Button)</div>
<svg class="i" style="left:998px;top:530px" width="10" height="10"><use href="#pick"/></svg>
<div class="b" style="left:760px;top:549px;width:255px;height:1px;background:#212121"></div>
<div class="b" style="left:796px;top:557px;width:183px;height:18px;background:#585858;border:1px solid #2c2c2c;box-sizing:border-box;border-radius:3px;text-align:center;font-size:10px;line-height:17px;color:#c8c8c8;letter-spacing:.3px">Add Component</div>
</div>

<!-- status -->
<div class="b" style="left:0;top:585px;width:1024px;height:15px;background:#151515"></div>
<svg class="i" style="left:2px;top:587px" width="11" height="11"><circle cx="5.500" cy="5.500" r="5" fill="#d8d8d8"/><rect x="4.700" y="2" width="1.800" height="4.500" fill="#222"/><rect x="4.700" y="7.500" width="1.800" height="1.800" fill="#222"/></svg>
<div class="p2"><div class="t" style="left:16px;top:587px;color:#a8a8a8;letter-spacing:.1px">[Adaptive Performance] FPS = Infinity</div></div>
<div class="b" style="left:941px;top:586px;width:1px;height:14px;background:#333"></div>
<div class="b" style="left:961px;top:586px;width:1px;height:14px;background:#333"></div>
<div class="b" style="left:982px;top:586px;width:1px;height:14px;background:#333"></div>
<div class="b" style="left:1003px;top:586px;width:1px;height:14px;background:#333"></div>
<svg class="i" style="left:946px;top:588px" width="12" height="11" fill="#b0b0b0"><ellipse cx="5.500" cy="6" rx="3.500" ry="4.500"/><path d="M0 0 11 11" stroke="#151515" stroke-width="1.500"/></svg>
<svg class="i" style="left:967px;top:588px" width="12" height="11" fill="#b0b0b0"><rect width="11" height="3" rx="1"/><rect y="4" width="11" height="3" rx="1"/><rect y="8" width="11" height="3" rx="1"/></svg>
<svg class="i" style="left:988px;top:588px" width="12" height="11" fill="none" stroke="#b0b0b0"><circle cx="5.500" cy="5.500" r="4.500"/><path d="M1 1 10 10"/></svg>
<svg class="i" style="left:1008px;top:587px" width="12" height="12" fill="none" stroke="#c8c8c8"><circle cx="6" cy="6" r="5"/><path d="M3.500 6 5.500 8 8.500 4"/></svg>
</div></body></html>
